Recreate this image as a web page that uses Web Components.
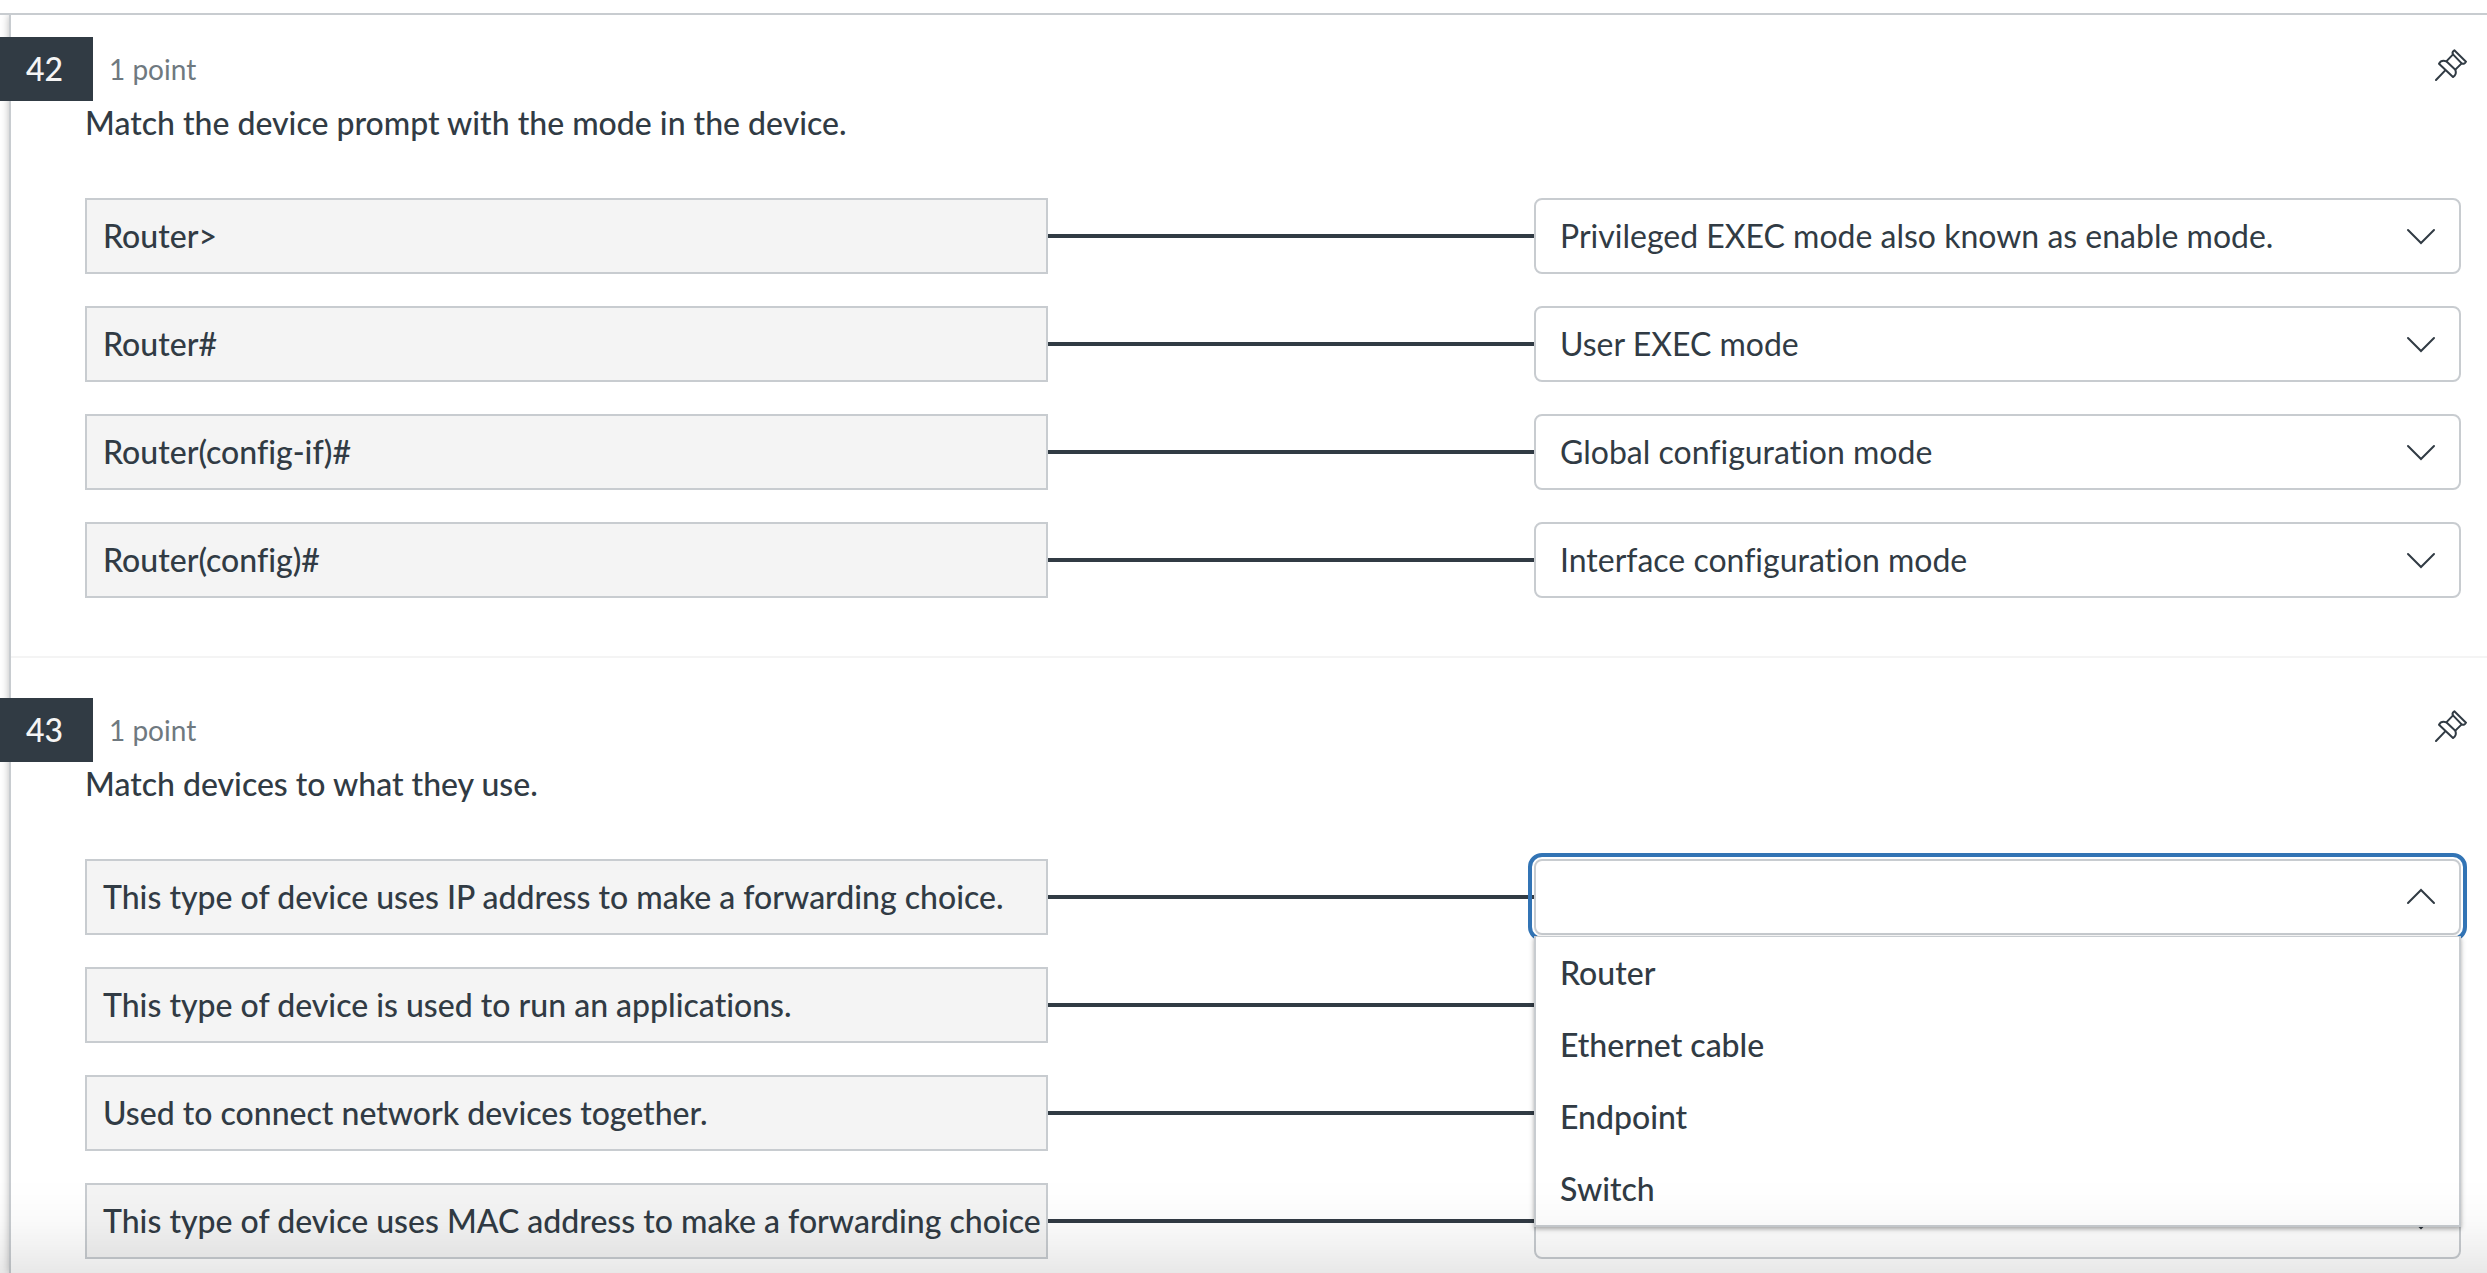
<!DOCTYPE html>
<html lang="en">
<head>
<meta charset="utf-8">
<meta name="viewport" content="width=device-width, initial-scale=1">
<title>Quiz</title>
<style>
  :root {
    --ink: #313b44;
    --muted: #6f7980;
    --line: #c8ccd0;
    --soft: #f4f4f4;
    --focus: #3274b5;
  }
  body {
    margin: 0;
    background: #fff;
    color: var(--ink);
    font: 500 32px/44px Lato, "Liberation Sans", sans-serif;
    font-variant-ligatures: no-common-ligatures;
  }
</style>
</head>
<body>
<quiz-sheet>
  <quiz-question number="42" points="1 point">
    <span slot="prompt">Match the device prompt with the mode in the device.</span>
    <match-row label="Router&gt;" value="Privileged EXEC mode also known as enable mode."></match-row>
    <match-row label="Router#" value="User EXEC mode"></match-row>
    <match-row label="Router(config-if)#" value="Global configuration mode"></match-row>
    <match-row label="Router(config)#" value="Interface configuration mode"></match-row>
  </quiz-question>
  <quiz-question number="43" points="1 point">
    <span slot="prompt">Match devices to what they use.</span>
    <match-row label="This type of device uses IP address to make a forwarding choice." choices="Router|Ethernet cable|Endpoint|Switch" open></match-row>
    <match-row label="This type of device is used to run an applications."></match-row>
    <match-row label="Used to connect network devices together."></match-row>
    <match-row label="This type of device uses MAC address to make a forwarding choice"></match-row>
  </quiz-question>
</quiz-sheet>
<script>
  class QuizSheet extends HTMLElement {
    constructor() {
      super();
      this.attachShadow({ mode: 'open' }).innerHTML = `
        <style>
          :host { display: flex; flex-direction: column; box-sizing: border-box; min-height: 100vh; padding-top: 13px; overflow: hidden; }
          main { flex: 1; border-top: 2px solid var(--line); padding-left: 9px; overflow: hidden; }
          .card { box-sizing: border-box; min-height: 100%; border-left: 2px solid var(--line); box-shadow: 0 0 8px rgba(0,0,0,.28); padding-bottom: 14px; }
          .fade { position: fixed; inset: auto 0 0 0; height: 96px; pointer-events: none; z-index: 5;
            background: linear-gradient(to top, rgba(0,0,0,.09), rgba(0,0,0,.055) 25%, rgba(0,0,0,.025) 50%, rgba(0,0,0,.007) 75%, transparent); }
        </style>
        <main><div class="card"><slot></slot></div></main>
        <div class="fade"></div>`;
    }
  }

  class PinButton extends HTMLElement {
    constructor() {
      super();
      this.attachShadow({ mode: 'open' }).innerHTML = `
        <style>
          :host { display: block; }
          button { display: block; padding: 0; border: 0; background: none; color: var(--ink); cursor: pointer; }
          svg { display: block; width: 32px; height: 32px; }
        </style>
        <button type="button" aria-label="Pin question">
          <svg viewBox="43 27 96 96" fill="none" stroke="currentColor" stroke-width="6" stroke-linejoin="round" stroke-linecap="round" aria-hidden="true">
            <path d="M46 120 73 92"/>
            <path d="M55 71 97 111C105 107 107 98 104 89L77 64C68 61 60 62 55 71Z"/>
            <path d="M77 64 97 43M104 89 123 70"/>
            <path d="M101 31 136 65C133 71 129 73 123 70L97 43C94 38 96 34 101 31Z"/>
          </svg>
        </button>`;
    }
  }

  class QuizQuestion extends HTMLElement {
    connectedCallback() {
      this.attachShadow({ mode: 'open' }).innerHTML = `
        <style>
          :host { display: block; padding: 22px 26px 58px 74px; }
          :host(:not(:first-of-type)) { border-top: 2px solid var(--soft); padding-top: 40px; }
          :host(:last-of-type) { padding-bottom: 0; }
          header { display: flex; align-items: center; gap: 16px; height: 64px; margin: 0 -6px 0 -85px; position: relative; }
          .number { box-sizing: border-box; width: 93px; padding-right: 4px; line-height: 64px; text-align: center; background: var(--ink); color: #f5f5f5; }
          .points { font-size: 28px; font-weight: 400; color: var(--muted); }
          pin-button { margin-left: auto; align-self: flex-start; padding-top: 12px; }
          .prompt { margin: 0 0 53px; }
          .rows { display: flex; flex-direction: column; gap: 32px; }
        </style>
        <header>
          <span class="number">${this.getAttribute('number')}</span>
          <span class="points">${this.getAttribute('points')}</span>
          <pin-button></pin-button>
        </header>
        <p class="prompt"><slot name="prompt"></slot></p>
        <div class="rows"><slot></slot></div>`;
    }
  }

  class MatchRow extends HTMLElement {
    connectedCallback() {
      const root = this.attachShadow({ mode: 'open' });
      root.innerHTML = `
        <style>
          :host { display: grid; grid-template-columns: minmax(0, 963fr) minmax(0, 486fr) minmax(0, 927fr); align-items: center; }
          label, select { box-sizing: border-box; height: 76px; border: 2px solid var(--line); line-height: 72px; white-space: nowrap; }
          label { padding: 0 16px; background: var(--soft); }
          .link { height: 4px; background: var(--ink); }
          .field { position: relative; }
          select { display: block; width: 100%; margin: 0; padding: 0 72px 0 24px; border-radius: 8px; appearance: none;
            background: #fff; color: inherit; font: inherit; font-weight: 400; font-variant-ligatures: inherit; outline: none; }
          .chevron { position: absolute; right: 24px; top: 22px; width: 32px; height: 32px; fill: none; stroke: var(--ink); stroke-width: 2; stroke-linecap: round; pointer-events: none; }
          :host([open]) select { outline: 4px solid var(--focus); outline-offset: 2px; }
          :host([open]) .chevron path { transform: rotate(180deg); transform-origin: 16px 16px; }
          .menu { position: absolute; z-index: 2; top: 100%; left: 0; right: 0; margin: 1px 0 0; padding: 0; list-style: none;
            background: #fff; border: 2px solid var(--line); border-top-width: 1px; box-shadow: 0 2px 6px rgba(0,0,0,.2), 0 2px 3px rgba(0,0,0,.16); }
          .menu li { padding: 0 24px; line-height: 72px; }
        </style>
        <label for="answer"></label>
        <div class="link"></div>
        <div class="field">
          <select id="answer"><option></option></select>
          <svg class="chevron" viewBox="0 0 32 32" aria-hidden="true"><path d="M3 10 16 23 29 10"/></svg>
        </div>`;
      root.querySelector('label').textContent = this.getAttribute('label');
      root.querySelector('option').textContent = this.getAttribute('value') || '';
      if (this.hasAttribute('open')) {
        const menu = document.createElement('ul');
        menu.className = 'menu';
        menu.setAttribute('role', 'listbox');
        for (const text of this.getAttribute('choices').split('|')) {
          const item = document.createElement('li');
          item.setAttribute('role', 'option');
          item.textContent = text;
          menu.append(item);
        }
        root.querySelector('.field').append(menu);
      }
    }
  }

  customElements.define('pin-button', PinButton);
  customElements.define('match-row', MatchRow);
  customElements.define('quiz-question', QuizQuestion);
  customElements.define('quiz-sheet', QuizSheet);
</script>
</body>
</html>
